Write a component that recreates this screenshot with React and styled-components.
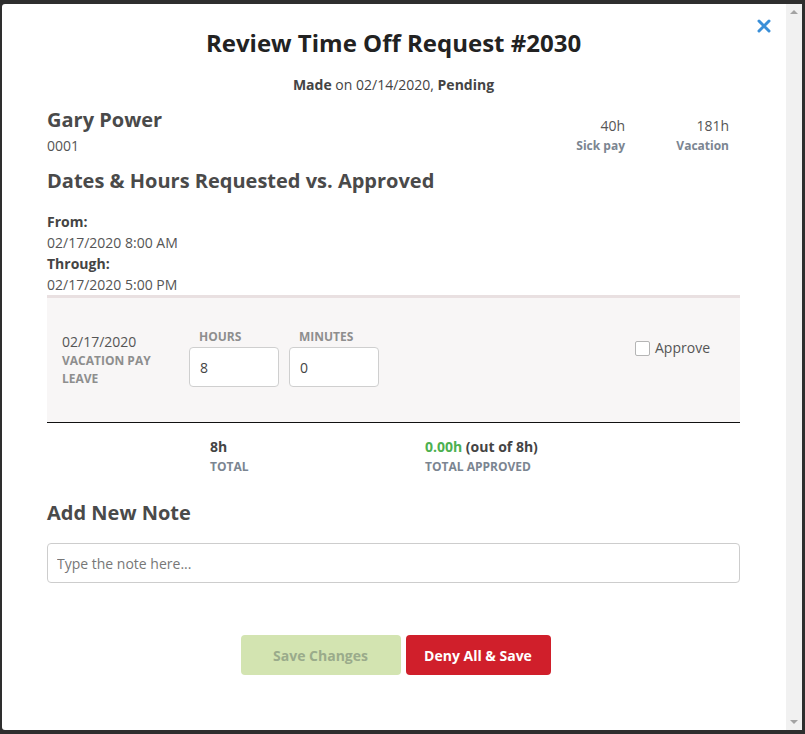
import React from "react";
import styled, { createGlobalStyle } from "styled-components";

const Global = createGlobalStyle`
  html, body { margin: 0; padding: 0; }
  body { font-family: "Open Sans", "Liberation Sans", sans-serif; background: #2e2e2e; }
  * { box-sizing: border-box; }
`;

const Frame = styled.div`
  height: 734px;
  padding: 4px 3px 4px 2px;
  display: flex;
  background: #2e2e2e;
`;

const Window = styled.div`
  flex: 1;
  display: flex;
  background: #fff;
  border-radius: 3px 0 0 3px;
  overflow: hidden;
`;

const Modal = styled.div`
  position: relative;
  flex: 1;
  padding: 24px 46px 0 45px;
  color: #444;
`;

const Scrollbar = styled.div`
  width: 16px;
  background: #f1f1f1;
  display: flex;
  flex-direction: column;
  justify-content: space-between;
  align-items: center;
  padding: 6px 0 6px;
`;

const Arrow = styled.div`
  width: 0;
  height: 0;
  border-left: 4px solid transparent;
  border-right: 4px solid transparent;
  ${(p) =>
    p.$down
      ? "border-top: 4px solid #a3a3a3;"
      : "border-bottom: 4px solid #a3a3a3;"}
`;

const Close = styled.button`
  position: absolute;
  top: 12px;
  right: 12px;
  width: 20px;
  height: 20px;
  padding: 0;
  border: 0;
  background: none;
  display: flex;
  align-items: center;
  justify-content: center;
`;

const Title = styled.h1`
  margin: 0;
  text-align: center;
  font-size: 24px;
  line-height: 29px;
  font-weight: 700;
  color: #222;
`;

const Subtitle = styled.p`
  margin: 18px 0 0;
  text-align: center;
  font-size: 14px;
  line-height: 20px;
  color: #444;
  b { font-weight: 700; }
`;

const HeaderRow = styled.div`
  margin-top: 12px;
  display: flex;
  justify-content: space-between;
  align-items: flex-start;
`;

const Name = styled.h2`
  margin: 0;
  font-size: 20px;
  line-height: 26px;
  font-weight: 700;
  color: #4a4a4a;
`;

const Sub = styled.div`
  margin-top: 3px;
  font-size: 14px;
  line-height: 20px;
  color: #555;
`;

const Balances = styled.div`
  display: flex;
  gap: 24px;
  padding: 9px 11px 0 0;
`;

const Balance = styled.div`
  width: 80px;
  text-align: right;
`;

const BalanceValue = styled.div`
  font-size: 14px;
  line-height: 20px;
  color: #555;
`;

const SmallLabel = styled.div`
  font-size: 12px;
  line-height: 20px;
  font-weight: 700;
  color: #7b8591;
`;

const Heading = styled.h2`
  margin: ${(p) => p.$mt || "12px"} 0 0;
  font-size: 20px;
  line-height: 26px;
  font-weight: 700;
  color: #4a4a4a;
`;

const Dates = styled.div`
  margin-top: 17px;
  font-size: 14px;
  line-height: 21px;
  color: #555;
  b { color: #444; font-weight: 700; display: block; }
`;

const Panel = styled.div`
  background: #f8f6f6;
  border-top: 3px solid #e9e0e1;
  border-bottom: 1px solid #111;
  display: flex;
  align-items: flex-start;
  padding: 31px 30px 34px 15px;
`;

const DayInfo = styled.div`
  width: 127px;
  margin-top: 3px;
`;

const DayDate = styled.div`
  font-size: 14px;
  line-height: 20px;
  color: #555;
`;

const DayType = styled.div`
  font-size: 12px;
  line-height: 18px;
  font-weight: 700;
  color: #8e8e8e;
`;

const Field = styled.div`
  width: 90px;
  margin-right: 10px;
`;

const FieldLabel = styled.div`
  padding-left: 10px;
  font-size: 12px;
  line-height: 16px;
  font-weight: 700;
  color: #8e8e8e;
  margin-bottom: 2px;
`;

const Input = styled.input`
  width: 90px;
  height: 40px;
  border: 1px solid #cfcfcf;
  border-radius: 4px;
  background: #fff;
  padding: 0 10px;
  font-family: "Open Sans", "Liberation Sans", sans-serif;
  font-size: 14px;
  color: #444;
  outline: none;
  &::placeholder { color: #777; }
`;

const ApproveLabel = styled.label`
  margin-left: auto;
  margin-top: 9px;
  display: flex;
  align-items: center;
  gap: 5px;
  font-size: 14px;
  line-height: 20px;
  color: #555;
`;

const Box = styled.span`
  width: 15px;
  height: 15px;
  border: 1px solid #b5b5b5;
  border-radius: 2px;
  background: #fff;
`;

const Totals = styled.div`
  margin-top: 14px;
  display: grid;
  grid-template-columns: 163px 215px 1fr;
`;

const TotalValue = styled.div`
  font-size: 14px;
  line-height: 20px;
  font-weight: 700;
  color: #444;
  span { color: #4cb050; }
`;

const NoteInput = styled(Input)`
  margin-top: 17px;
  width: 100%;
  padding: 0 9px;
  border-color: #cdcdcd;
`;

const Actions = styled.div`
  margin-top: 52px;
  padding-left: 4px;
  display: flex;
  justify-content: center;
  gap: 5px;
`;

const Button = styled.button`
  width: ${(p) => p.$w};
  height: 40px;
  border: 0;
  border-radius: 4px;
  font-family: "Open Sans", "Liberation Sans", sans-serif;
  font-size: 14px;
  font-weight: 700;
  background: ${(p) => p.$bg};
  color: ${(p) => p.$fg};
`;

export default function App() {
  return (
    <>
      <Global />
      <Frame>
        <Window>
          <Modal>
            <Close aria-label="Close">
              <svg width="14" height="14" viewBox="0 0 14 14">
                <path d="M2 2 L12 12 M12 2 L2 12" stroke="#3a8fd8" strokeWidth="3" strokeLinecap="round" />
              </svg>
            </Close>
            <Title>Review Time Off Request #2030</Title>
            <Subtitle>
              <b>Made</b> on 02/14/2020, <b>Pending</b>
            </Subtitle>
            <HeaderRow>
              <div>
                <Name>Gary Power</Name>
                <Sub>0001</Sub>
              </div>
              <Balances>
                <Balance>
                  <BalanceValue>40h</BalanceValue>
                  <SmallLabel>Sick pay</SmallLabel>
                </Balance>
                <Balance>
                  <BalanceValue>181h</BalanceValue>
                  <SmallLabel>Vacation</SmallLabel>
                </Balance>
              </Balances>
            </HeaderRow>
            <Heading>Dates &amp; Hours Requested vs. Approved</Heading>
            <Dates>
              <b>From:</b>
              02/17/2020 8:00 AM
              <b>Through:</b>
              02/17/2020 5:00 PM
            </Dates>
            <Panel>
              <DayInfo>
                <DayDate>02/17/2020</DayDate>
                <DayType>VACATION PAY</DayType>
                <DayType>LEAVE</DayType>
              </DayInfo>
              <Field>
                <FieldLabel>HOURS</FieldLabel>
                <Input defaultValue="8" />
              </Field>
              <Field>
                <FieldLabel>MINUTES</FieldLabel>
                <Input defaultValue="0" />
              </Field>
              <ApproveLabel>
                <Box />
                Approve
              </ApproveLabel>
            </Panel>
            <Totals>
              <div />
              <div>
                <TotalValue>8h</TotalValue>
                <SmallLabel>TOTAL</SmallLabel>
              </div>
              <div>
                <TotalValue>
                  <span>0.00h</span> (out of 8h)
                </TotalValue>
                <SmallLabel>TOTAL APPROVED</SmallLabel>
              </div>
            </Totals>
            <Heading $mt="23px">Add New Note</Heading>
            <NoteInput placeholder="Type the note here..." />
            <Actions>
              <Button $w="160px" $bg="#d3e4b1" $fg="#9aab8b">Save Changes</Button>
              <Button $w="145px" $bg="#d01f2b" $fg="#fff">Deny All &amp; Save</Button>
            </Actions>
          </Modal>
          <Scrollbar>
            <Arrow />
            <Arrow $down />
          </Scrollbar>
        </Window>
      </Frame>
    </>
  );
}
